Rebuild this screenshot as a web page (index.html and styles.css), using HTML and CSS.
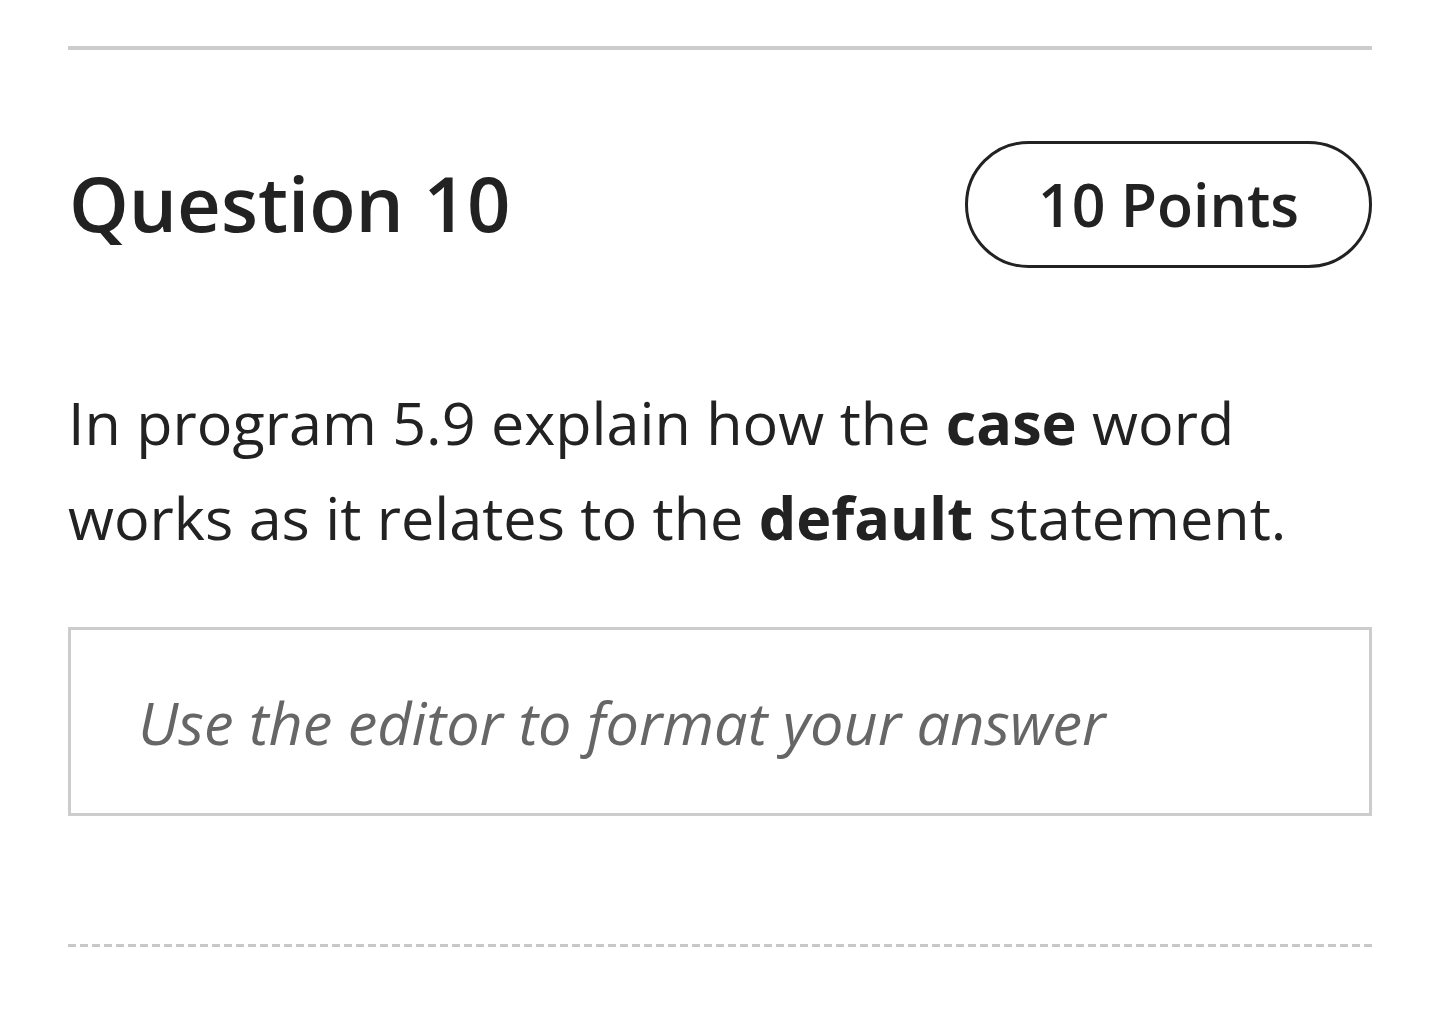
FILE: index.html
```html
<!DOCTYPE html>
<html lang="en">
<head>
<meta charset="utf-8">
<title>Question 10</title>
<link rel="stylesheet" href="styles.css">
</head>
<body>
<main class="page">
  <hr class="rule-top">
  <section class="question">
    <header class="q-header">
      <h2 class="q-title">Question 10</h2>
      <span class="q-points">10 Points</span>
    </header>
    <p class="q-text">In program 5.9 explain how the <strong>case</strong> word works as it relates to the <strong>default</strong> statement.</p>
    <div class="answer">
      <span class="placeholder">Use the editor to format your answer</span>
    </div>
  </section>
  <div class="rule-dashed"></div>
</main>
</body>
</html>
```

FILE: styles.css
```css
html, body {
  margin: 0;
  padding: 0;
  background: #ffffff;
}
body {
  font-family: "Open Sans", "Noto Sans", sans-serif;
  color: #222222;
}
.page {
  padding: 46px 68px 0 68px;
}
.rule-top {
  margin: 0;
  border: 0;
  height: 4px;
  background: #cccccc;
}
.question {
  display: flex;
  flex-direction: column;
}
.q-header {
  display: flex;
  justify-content: space-between;
  align-items: center;
  margin-top: 91px;
}
.q-title {
  margin: -4px 0 0 1px;
  font-size: 76px;
  font-weight: 600;
  line-height: 1;
  color: #222222;
}
.q-points {
  display: flex;
  align-items: center;
  justify-content: center;
  box-sizing: border-box;
  width: 407px;
  height: 127px;
  border: 3px solid #222222;
  border-radius: 64px;
  font-size: 59px;
  font-weight: 600;
  color: #222222;
  padding-bottom: 2px;
}
.q-text {
  margin: 107px 0 0 0;
  font-size: 59.3px;
  line-height: 95px;
  font-weight: 400;
  color: #222222;
}
.q-text strong {
  font-weight: 700;
}
.answer {
  margin-top: 62px;
  box-sizing: border-box;
  height: 189px;
  border: 3px solid #cccccc;
  display: flex;
  align-items: center;
  padding-left: 67px;
}
.placeholder {
  font-size: 59.4px;
  font-style: italic;
  color: #666666;
}
.rule-dashed {
  margin-top: 128px;
  height: 3px;
  background: repeating-linear-gradient(to right, #c8c8c8 0 8px, transparent 8px 12px);
}
```
